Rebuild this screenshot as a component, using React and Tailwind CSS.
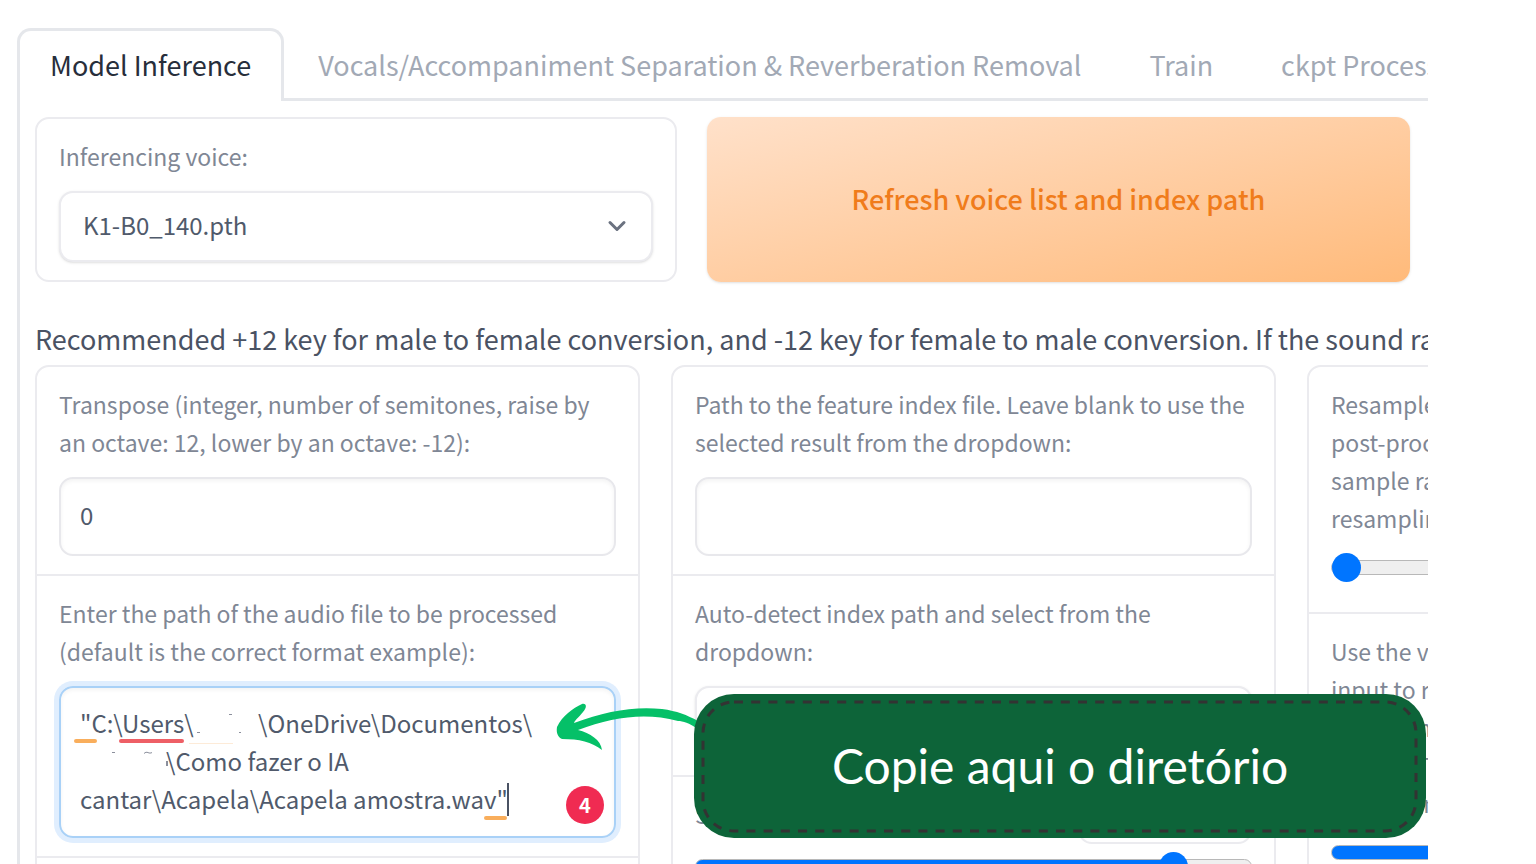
import { ChevronDown } from "lucide-react";

const audioPath =
    '"C:\\Users\\' +
    "\u00a0".repeat(12) +
    "\\OneDrive\\Documentos\\\n" +
    "\u00a0".repeat(16) +
    "\\Como fazer o IA\ncantar\\Acapela\\Acapela amostra.wav\"";

function Block({ children, last }) {
    return (
        <div
            className={
                last
                    ? "px-[22px] pt-[18px] pb-[18px]"
                    : "border-b-2 border-[#ebebef] px-[22px] pt-[18px] pb-[18px]"
            }
        >
            {children}
        </div>
    );
}

function Label({ id, children }) {
    return (
        <label htmlFor={id} className="block text-[23px] leading-[38px] whitespace-nowrap text-[#7f8795]">
            {children}
        </label>
    );
}

function Dropdown({ id, options }) {
    return (
        <div className="relative mt-4">
            <select
                id={id}
                className="h-[71px] w-full appearance-none rounded-[14px] border-2 border-[#ebebef] bg-white px-[22px] pb-1 text-[24px] text-[#505a6b] shadow-sm outline-none"
            >
                {options.map((option) => (
                    <option key={option}>{option}</option>
                ))}
            </select>
            <ChevronDown
                className="pointer-events-none absolute top-[21px] right-[22px] size-7 text-[#6b7280]"
                strokeWidth={2.6}
            />
        </div>
    );
}

function Slider({ id, value }) {
    return (
        <input
            id={id}
            type="range"
            min="0"
            max="100"
            defaultValue={value}
            style={{
                backgroundImage: `linear-gradient(to right, #0075ff ${value}%, #efefef ${value}%)`,
            }}
            className="block h-[15px] w-full appearance-none rounded-full border border-[#b8b8b8] [&::-webkit-slider-thumb]:size-[29px] [&::-webkit-slider-thumb]:appearance-none [&::-webkit-slider-thumb]:rounded-full [&::-webkit-slider-thumb]:bg-[#0075ff]"
        />
    );
}

// Green arrow and note pointing at the path field
function Callout() {
    return (
        <div className="absolute top-[694px] left-[694px] h-[144px] w-[732px]">
            <svg
                className="absolute top-0 -left-[144px] h-[70px] w-[150px]"
                viewBox="550 694 150 70"
                aria-hidden="true"
            >
                <path
                    d="M582 704C587 703 587 708 583 712C579 717 575 720 574 723C605 711 635 706 662 709C677 711 687 715 698 721V729C689 723 683 721 678 721C645 712 613 717 578 730C590 733 601 740 602 750C592 742 579 739 562 739C558 737 556 733 557 727C562 716 573 708 582 704Z"
                    fill="#05c068"
                />
            </svg>
            <div className="absolute inset-0 flex items-center justify-center rounded-[40px] bg-[#0d6439] font-['Lato',sans-serif] text-[48px] leading-none text-white">
                Copie aqui o diretório
            </div>
            <svg className="absolute inset-0 h-full w-full" viewBox="0 0 732 144" aria-hidden="true">
                <rect
                    x="9"
                    y="8"
                    width="713"
                    height="129"
                    rx="31"
                    fill="none"
                    stroke="#333333"
                    strokeWidth="3"
                    strokeDasharray="9 8.2"
                />
            </svg>
        </div>
    );
}

export default function App() {
    const tabs = [
        "Vocals/Accompaniment Separation & Reverberation Removal",
        "Train",
        "ckpt Processing",
    ];

    return (
        <main className="relative h-screen overflow-hidden bg-white pt-7 pr-[108px] pl-[17px] font-['Noto_Sans_CJK_SC',sans-serif]">
            <div className="overflow-hidden">
                <nav className="flex h-[73px] text-[27px] leading-[40px] whitespace-nowrap">
                    <button className="shrink-0 rounded-t-[14px] border-x-[3px] border-t-[3px] border-[#e5e7eb] px-[30px] pb-[3px] text-[#272e3b]">
                        Model Inference
                    </button>
                    {tabs.map((tab) => (
                        <button
                            key={tab}
                            className="shrink-0 border-b-[3px] border-[#e5e7eb] px-[34px] pt-[3px] text-[#a2a9b5]"
                        >
                            {tab}
                        </button>
                    ))}
                </nav>

                <div className="w-[136%] border-l-[3px] border-[#e5e7eb] pt-4 pr-6 pb-8 pl-[15px]">
                    <div className="grid grid-cols-[642fr_703fr_472fr] gap-[30px]">
                        <div className="rounded-[14px] border-2 border-[#ebebef] px-[22px] pt-[18px] pb-[18px]">
                            <Label id="voice">Inferencing voice:</Label>
                            <Dropdown id="voice" options={["K1-B0_140.pth"]} />
                        </div>
                        <button className="rounded-[14px] bg-linear-to-br from-[#ffe1ca] to-[#ffba7a] text-[27px] font-medium text-[#f07c1b] shadow-sm">
                            Refresh voice list and index path
                        </button>
                    </div>

                    <p className="mt-[33px] mb-[2px] text-[27px] leading-[48px] whitespace-nowrap text-[#4a5263]">
                        Recommended +12 key for male to female conversion, and -12 key for female to male
                        conversion. If the sound range goes too far
                    </p>

                    <div className="grid grid-cols-3 items-start gap-[31px]">
                        <section className="rounded-t-[14px] border-2 border-[#ebebef]">
                            <Block>
                                <Label id="transpose">
                                    Transpose (integer, number of semitones, raise by
                                    <br />
                                    an octave: 12, lower by an octave: -12):
                                </Label>
                                <input
                                    id="transpose"
                                    defaultValue="0"
                                    className="mt-4 block h-[79px] w-full rounded-[14px] border-2 border-[#e8e8ec] px-[19px] pb-1 text-[24px] text-[#505a6b] inset-shadow-sm outline-none"
                                />
                            </Block>
                            <Block>
                                <Label id="audio">
                                    Enter the path of the audio file to be processed
                                    <br />
                                    (default is the correct format example):
                                </Label>
                                <div className="relative mt-4">
                                    <textarea
                                        id="audio"
                                        spellCheck="false"
                                        defaultValue={audioPath}
                                        className="block h-[152px] w-full resize-none overflow-hidden rounded-[14px] border-2 border-[#a9d1f7] px-[19px] pt-4 text-[24px] leading-[38px] whitespace-pre text-[#505a6b] inset-shadow-sm ring-5 ring-[#e0eefe] outline-none"
                                    />
                                    {/* spell checker marks, text caret and error count */}
                                    <span className="absolute top-[53px] left-[15px] h-1 w-[23px] rounded-full bg-[#f9ae5c]" />
                                    <span className="absolute top-[53px] left-[60px] h-1 w-[65px] rounded-full bg-[#ee5f66]" />
                                    <span className="absolute top-[130px] left-[425px] h-1 w-[23px] rounded-full bg-[#f9ae5c]" />
                                    <span className="absolute top-[97px] left-[448px] h-[33px] w-[2px] bg-[#4a5263]" />
                                    <svg
                                        className="pointer-events-none absolute top-[24px] left-[50px] h-[60px] w-[140px]"
                                        viewBox="0 0 140 60"
                                        fill="#8b8f9c"
                                        aria-hidden="true"
                                    >
                                        <rect x="120" y="4" width="3" height="1" />
                                        <rect x="88" y="22" width="3" height="1" />
                                        <rect x="130" y="22" width="2" height="1" />
                                        <rect x="3" y="42" width="3" height="1" />
                                        <path d="M35 43q2-2 4-1t4 0v1q-2 1-4 0t-4 1z" />
                                        <rect x="57" y="51" width="2" height="5" />
                                        <rect x="80" y="33" width="44" height="1" fill="#fdebd8" />
                                    </svg>
                                    <span className="absolute right-[12px] bottom-[14px] flex size-[38px] items-center justify-center rounded-full bg-[#f02b52] text-[20px] font-bold text-white">
                                        4
                                    </span>
                                </div>
                            </Block>
                            <Block last />
                        </section>

                        <section className="rounded-t-[14px] border-2 border-[#ebebef]">
                            <Block>
                                <Label id="index">
                                    Path to the feature index file. Leave blank to use the
                                    <br />
                                    selected result from the dropdown:
                                </Label>
                                <input
                                    id="index"
                                    className="mt-4 block h-[79px] w-full rounded-[14px] border-2 border-[#e8e8ec] px-[19px] text-[24px] text-[#505a6b] inset-shadow-sm outline-none"
                                />
                            </Block>
                            <Block>
                                <Label id="detected">
                                    Auto-detect index path and select from the
                                    <br />
                                    dropdown:
                                </Label>
                                <Dropdown id="detected" options={[""]} />
                            </Block>
                            <Block last>
                                <div className="mb-[15px] flex h-[49px] justify-between">
                                    <Label id="ratio">Search feature ratio</Label>
                                    <input
                                        aria-label="Ratio value"
                                        className="w-[174px] rounded-[14px] border-2 border-[#ebebef] px-4"
                                    />
                                </div>
                                <Slider id="ratio" value={88} />
                            </Block>
                        </section>

                        <section className="rounded-t-[14px] border-2 border-[#ebebef]">
                            <Block>
                                <Label id="resample">
                                    Resample the output audio in
                                    <br />
                                    post-processing to the final
                                    <br />
                                    sample rate. Set to 0 for no
                                    <br />
                                    resampling:
                                </Label>
                                <div className="pt-[23px] pb-[19px]">
                                    <Slider id="resample" value={0} />
                                </div>
                            </Block>
                            <Block last>
                                <Label id="envelope">
                                    Use the volume envelope of the
                                    <br />
                                    input to replace or mix with
                                    <br />
                                    the volume envelope of the
                                    <br />
                                    output. The closer the ratio is
                                    <br />
                                    to 1, the more it is used:
                                </Label>
                                <div className="pt-[23px]">
                                    <Slider id="envelope" value={100} />
                                </div>
                            </Block>
                        </section>
                    </div>
                </div>
            </div>
            <Callout />
        </main>
    );
}
